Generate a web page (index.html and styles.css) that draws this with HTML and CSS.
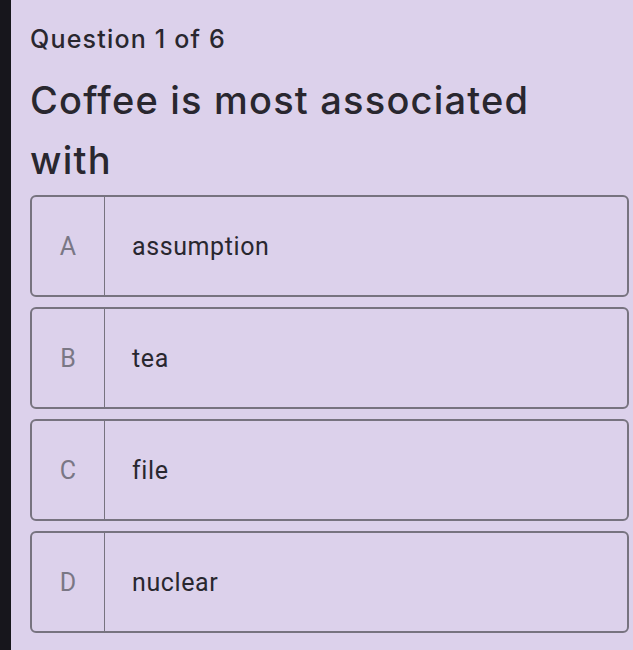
FILE: index.html
```html
<!DOCTYPE html>
<html lang="en">
<head>
  <meta charset="UTF-8">
  <title>Quiz</title>
  <meta name="viewport" content="width=device-width, initial-scale=1.0">
  <link rel="stylesheet" href="styles.css">
</head>
<body>

  <div class="quiz">
    <p class="counter">Question 1 of 6</p>
    <h1 class="prompt">Coffee is most associated with</h1>

    <div class="options">
      <button class="option">
        <span class="letter">A</span>
        <span class="answer">assumption</span>
      </button>
      <button class="option">
        <span class="letter">B</span>
        <span class="answer">tea</span>
      </button>
      <button class="option">
        <span class="letter">C</span>
        <span class="answer">file</span>
      </button>
      <button class="option">
        <span class="letter">D</span>
        <span class="answer">nuclear</span>
      </button>
    </div>
  </div>

</body>
</html>
```

FILE: styles.css
```css
:root {
  --bg: #dcd1eb;
  --ink: #29272f;
  --muted: #7a7785;
  --line: #77737f;
  --border-radius: 6px;
}
* {
  margin: 0;
  padding: 0;
  box-sizing: border-box;
}
body {
  font-family: 'Inter', 'Roboto', sans-serif;
  background-color: var(--bg);
  color: var(--ink);
  border-left: 11px solid #17161c;
  min-height: 100vh;
  overflow: hidden;
}

.quiz {
  padding: 24px 4px 0 19px;
}

.counter {
  font-size: 25px;
  font-weight: 500;
  letter-spacing: 1.2px;
  margin-bottom: 16px;
}

.prompt {
  font-size: 38px;
  font-weight: 500;
  line-height: 60px;
  letter-spacing: 1.2px;
  width: 540px;
  margin-bottom: 5px;
}

.options {
  display: flex;
  flex-direction: column;
  gap: 10px;
}

.option {
  display: flex;
  align-items: stretch;
  height: 102px;
  background: transparent;
  border: 2px solid var(--line);
  border-radius: var(--border-radius);
  font-family: 'Roboto', sans-serif;
  text-align: left;
  cursor: pointer;
}

.letter {
  width: 73px;
  flex-shrink: 0;
  display: flex;
  align-items: center;
  justify-content: center;
  border-right: 1.5px solid var(--line);
  color: var(--muted);
  font-size: 25px;
}

.answer {
  display: flex;
  align-items: center;
  padding-left: 27px;
  color: var(--ink);
  font-size: 25px;
  letter-spacing: 0.6px;
}
```
